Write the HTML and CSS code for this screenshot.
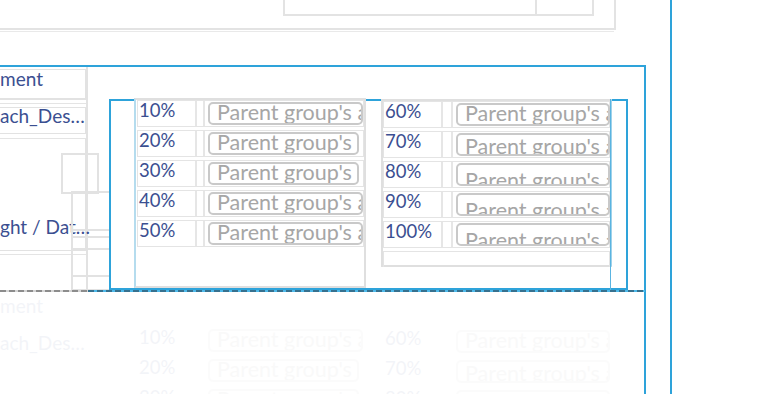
FILE: index.html
```html
<!DOCTYPE html>
<html lang="en">
<head>
<meta charset="utf-8">
<title>Canvas</title>
<link rel="stylesheet" href="styles.css">
</head>
<body>
<div class="canvas">
  <div class="frame-top"></div>
  <div class="frame-top-line"></div>
  <div class="topbox"><div class="topbox-cell"></div></div>
  <div class="vline"></div>
  <div class="blue-frame"></div>

  <div class="leftcol">
    <div class="lrow r1"><span class="ltext">ment</span></div>
    <div class="lsep s1"></div>
    <div class="lrow r2"><span class="ltext t2">ach_Des…</span></div>
    <div class="lsep s2"></div>
    <div class="lrow r3"><span class="ltext">ght / Dat…</span></div>
    <div class="lsep s3"></div>
  </div>

  <div class="sbox-a"></div>
  <div class="sbox-b">
    <div class="seg g1"></div>
    <div class="seg g2"></div>
    <div class="seg g3"></div>
    <div class="seg g4"></div>
  </div>

  <div class="selbox"></div>

  <div class="panel p1">
    <div class="row"><div class="num">10%</div><div class="gapcell"></div><div class="inp">Parent group's assignment</div></div>
    <div class="row"><div class="num">20%</div><div class="gapcell"></div><div class="inp narrow">Parent group's assignment</div></div>
    <div class="row"><div class="num">30%</div><div class="gapcell"></div><div class="inp narrow">Parent group's assignment</div></div>
    <div class="row"><div class="num">40%</div><div class="gapcell"></div><div class="inp">Parent group's assignment</div></div>
    <div class="row"><div class="num">50%</div><div class="gapcell"></div><div class="inp">Parent group's assignment</div></div>
  </div>

  <div class="panel p2">
    <div class="row"><div class="num">60%</div><div class="gapcell"></div><div class="inp">Parent group's assignment</div></div>
    <div class="row"><div class="num">70%</div><div class="gapcell"></div><div class="inp mid">Parent group's assignment</div></div>
    <div class="row"><div class="num">80%</div><div class="gapcell"></div><div class="inp low">Parent group's assignment</div></div>
    <div class="row"><div class="num">90%</div><div class="gapcell"></div><div class="inp low">Parent group's assignment</div></div>
    <div class="row"><div class="num">100%</div><div class="gapcell"></div><div class="inp low">Parent group's assignment</div></div>
    <div class="empty-row"></div>
  </div>

  <div class="sel-line"></div>
  <div class="dash-gray"></div>
  <div class="dash-blue"></div>

  <div class="ghost">
    <div class="ghost-inner">
      <div class="leftcol">
        <div class="lrow r1"><span class="ltext">ment</span></div>
        <div class="lsep s1"></div>
        <div class="lrow r2"><span class="ltext t2">ach_Des…</span></div>
      </div>
      <div class="panel p1">
        <div class="row"><div class="num">10%</div><div class="gapcell"></div><div class="inp">Parent group's assignment</div></div>
        <div class="row"><div class="num">20%</div><div class="gapcell"></div><div class="inp narrow">Parent group's assignment</div></div>
        <div class="row"><div class="num">30%</div><div class="gapcell"></div><div class="inp narrow">Parent group's assignment</div></div>
      </div>
      <div class="panel p2">
        <div class="row"><div class="num">60%</div><div class="gapcell"></div><div class="inp">Parent group's assignment</div></div>
        <div class="row"><div class="num">70%</div><div class="gapcell"></div><div class="inp mid">Parent group's assignment</div></div>
        <div class="row"><div class="num">80%</div><div class="gapcell"></div><div class="inp low">Parent group's assignment</div></div>
      </div>
    </div>
  </div>
</div>
</body>
</html>
```

FILE: styles.css
```css
* { box-sizing: border-box; }
html, body { margin: 0; padding: 0; }
body {
  width: 780px;
  height: 394px;
  overflow: hidden;
  background: #fff;
  font-family: Lato, "Noto Sans", sans-serif;
}
.canvas {
  position: relative;
  width: 780px;
  height: 394px;
  overflow: hidden;
}

/* top artboard remnants */
.frame-top {
  position: absolute;
  left: -10px;
  top: -10px;
  width: 626px;
  height: 40px;
  border: 2px solid #e3e3e3;
}
.frame-top-line {
  position: absolute;
  left: 0;
  top: 31px;
  width: 614px;
  height: 1px;
  background: #e9e9e9;
}
.topbox {
  position: absolute;
  left: 283px;
  top: -2px;
  width: 311px;
  height: 18px;
  border: 2px solid #e3e3e3;
  display: flex;
  justify-content: flex-end;
}
.topbox-cell {
  width: 57px;
  border-left: 2px solid #e3e3e3;
}
.vline {
  position: absolute;
  left: 670px;
  top: 0;
  width: 2px;
  height: 394px;
  background: #2ea3da;
}
.blue-frame {
  position: absolute;
  left: -10px;
  top: 65px;
  width: 656px;
  height: 340px;
  border-style: solid;
  border-color: #2ea3da;
  border-width: 2px 2px 0 0;
}

/* left column */
.leftcol {
  position: absolute;
  left: -10px;
  top: 67px;
  width: 98px;
  height: 223px;
  border-right: 2px solid #e2e2e2;
  display: flex;
  flex-direction: column;
}
.lrow {
  width: 96px;
  border: 1px solid #e2e2e2;
  border-left: none;
  flex: none;
}
.r1 {
  margin-top: 2px;
  height: 31px;
  border-bottom-width: 2px;
}
.r2 {
  margin-top: 3px;
  height: 27px;
}
.r3 {
  margin-top: 0;
  height: 112px;
  border-top: none;
  display: flex;
  flex-direction: column;
  justify-content: flex-end;
  padding-bottom: 14px;
}
.lsep {
  width: 96px;
  height: 1px;
  background: #e4e4e4;
  flex: none;
}
.s1 { margin-top: 3px; }
.s2 { margin-top: 4px; }
.s3 { margin-top: 3px; }
.ltext {
  display: block;
  padding-left: 10px;
  font-size: 19px;
  line-height: 19px;
  margin-top: -1px;
  color: #3b4f91;
  white-space: nowrap;
}
.t2 { margin-top: -2px; }
.r3 .ltext { margin-top: 0; }

/* stacked ghost boxes */
.sbox-a {
  position: absolute;
  left: 61px;
  top: 153px;
  width: 38px;
  height: 41px;
  border: 2px solid #e2e2e2;
}
.sbox-b {
  position: absolute;
  left: 71px;
  top: 191px;
  width: 40px;
  height: 100px;
  border: 2px solid #e2e2e2;
  display: flex;
  flex-direction: column;
}
.seg { border-bottom: 2px solid #e2e2e2; flex: none; }
.g1 { height: 38px; }
.g2 { height: 7px; }
.g3 { height: 12px; }
.g4 { height: 27px; }

/* selection */
.selbox {
  position: absolute;
  left: 109px;
  top: 99px;
  width: 519px;
  height: 191px;
  border: 2px solid #2ea3da;
}
.sel-line {
  position: absolute;
  left: 610px;
  top: 99px;
  width: 1px;
  height: 191px;
  background: #5ab4e1;
}

/* panels */
.panel {
  position: absolute;
  border: 2px solid #dfdfdf;
  background: #fff;
  display: flex;
  flex-direction: column;
  gap: 3px;
}
.p1 {
  left: 134px;
  top: 98px;
  width: 232px;
  height: 190px;
  border-left-color: #b5dcee;
  padding-left: 1px;
}
.p2 {
  left: 381px;
  top: 99px;
  width: 231px;
  height: 168px;
  border-right-color: #9fd2ea;
}
.row {
  display: flex;
  height: 27px;
  border: 1px solid #e4e4e4;
  flex: none;
}
.num {
  width: 59px;
  flex: none;
  border-right: 2px solid #e6e6e6;
  color: #3b4f91;
  font-size: 18.5px;
  line-height: 18px;
  padding-left: 1px;
  white-space: nowrap;
}
.gapcell {
  width: 8px;
  flex: none;
  border-right: 2px solid #e6e6e6;
}
.inp {
  margin: 1px 0 1px 3px;
  width: 155px;
  flex: none;
  border: 2px solid #c9c9c9;
  border-radius: 5px;
  padding-left: 7px;
  font-size: 21.5px;
  line-height: 17px;
  color: #a6a6a6;
  white-space: nowrap;
  overflow: hidden;
}
.narrow { width: 151px; }
.p2 .gapcell { width: 10px; }
.p2 .inp { width: 154px; }
.mid { padding-top: 3px; }
.low { padding-top: 7px; }
.empty-row {
  height: 16px;
  border: 1px solid #e4e4e4;
  border-bottom: none;
  flex: none;
}

/* dashed drop line */
.dash-gray {
  position: absolute;
  left: 0;
  top: 290px;
  width: 88px;
  height: 2px;
  background: repeating-linear-gradient(90deg, #8c8c8c 0 6px, #d4d4d4 6px 9px);
}
.dash-blue {
  position: absolute;
  left: 88px;
  top: 290px;
  width: 557px;
  height: 2px;
  background: repeating-linear-gradient(90deg, #36718f 0 6px, #4db9ea 6px 9px);
}

/* drag ghost */
.ghost {
  position: absolute;
  left: 0;
  top: 292px;
  width: 644px;
  height: 102px;
  overflow: hidden;
  opacity: 0.06;
}
.ghost-inner {
  position: absolute;
  left: 0;
  top: -65px;
  width: 780px;
  height: 400px;
}
.ghost .leftcol,
.ghost .lrow,
.ghost .panel,
.ghost .row,
.ghost .num,
.ghost .gapcell {
  border-color: transparent;
}
.ghost .lsep { background: transparent; }
.ghost .panel { background: transparent; }
```
